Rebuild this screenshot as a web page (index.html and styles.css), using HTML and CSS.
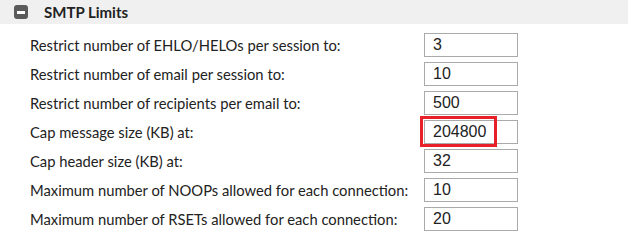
FILE: index.html
```html
<!DOCTYPE html>
<html>
<head>
<meta charset="utf-8">
<link rel="stylesheet" href="styles.css">
</head>
<body>
<div class="header">
  <span class="toggle"><span class="bar"></span></span>
  <span class="title">SMTP Limits</span>
</div>
<div class="rows">
  <div class="row"><label>Restrict number of EHLO/HELOs per session to:</label><div class="field"><input type="text" value="3"></div></div>
  <div class="row"><label>Restrict number of email per session to:</label><div class="field"><input type="text" value="10"></div></div>
  <div class="row"><label>Restrict number of recipients per email to:</label><div class="field"><input type="text" value="500"></div></div>
  <div class="row"><label>Cap message size (KB) at:</label><div class="field"><input type="text" value="204800"><span class="highlight"></span></div></div>
  <div class="row"><label>Cap header size (KB) at:</label><div class="field"><input type="text" value="32"></div></div>
  <div class="row"><label>Maximum number of NOOPs allowed for each connection:</label><div class="field"><input type="text" value="10"></div></div>
  <div class="row"><label>Maximum number of RSETs allowed for each connection:</label><div class="field"><input type="text" value="20"></div></div>
</div>
</body>
</html>
```
FILE: styles.css
```css
html, body {
  margin: 0;
  padding: 0;
  background: #ffffff;
  font-family: Lato, "Noto Sans", sans-serif;
  color: #222222;
}
.header {
  height: 24px;
  background: #f0f0f0;
  display: flex;
  align-items: center;
  padding-left: 14px;
  gap: 16px;
}
.toggle {
  width: 14px;
  height: 14px;
  background: #5a5a5a;
  border-radius: 3px;
  display: flex;
  align-items: center;
  justify-content: center;
}
.toggle .bar {
  width: 8px;
  height: 3px;
  background: #ffffff;
}
.title {
  font-weight: bold;
  font-size: 15px;
  color: #222222;
}
.rows {
  display: flex;
  flex-direction: column;
  gap: 5px;
  padding: 9px 0 0 30px;
}
.row {
  display: grid;
  grid-template-columns: 394px 94px;
  height: 24px;
  align-items: center;
}
.row label {
  font-size: 14.75px;
  color: #222222;
}
.field {
  position: relative;
  height: 24px;
}
.field input {
  box-sizing: border-box;
  width: 94px;
  height: 24px;
  margin: 0;
  border: 1px solid #aaaaaa;
  padding: 0 0 0 8px;
  font-family: "Liberation Sans", Arial, sans-serif;
  font-size: 16px;
  color: #222222;
  background: #ffffff;
  outline: none;
}
.highlight {
  position: absolute;
  left: -4px;
  top: -4px;
  width: 77px;
  height: 31px;
  box-sizing: border-box;
  border: 3px solid #e8202a;
}
```
